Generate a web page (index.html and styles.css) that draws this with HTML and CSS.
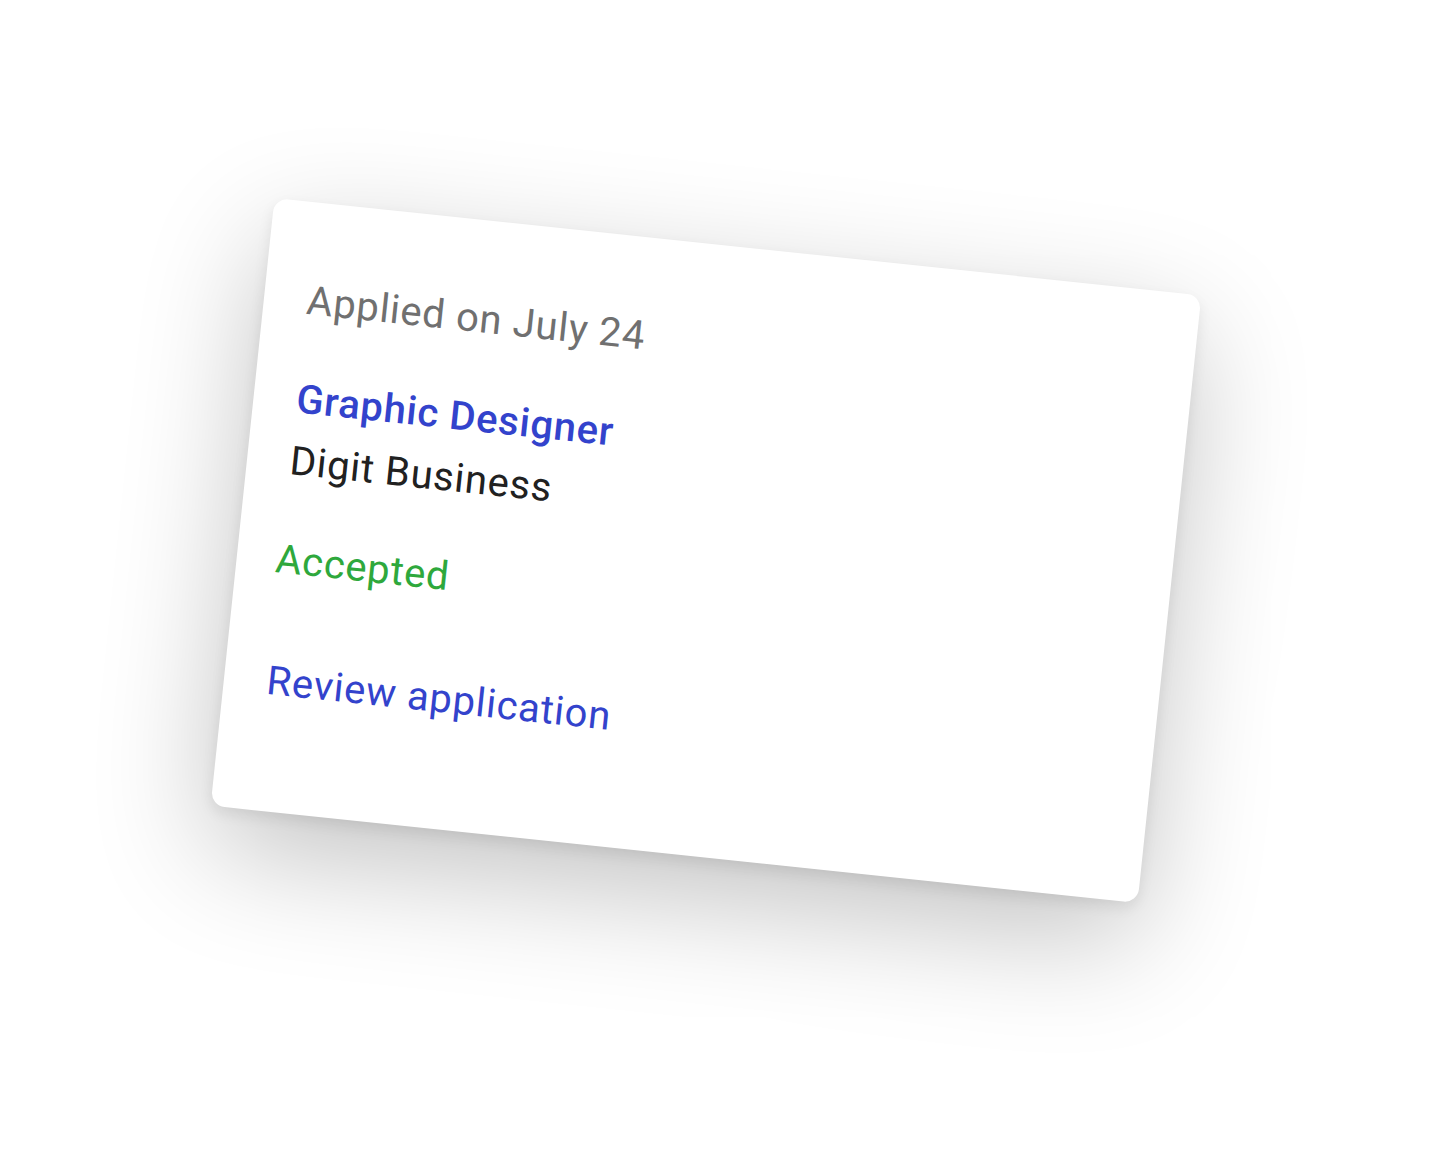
FILE: index.html
```html
<!DOCTYPE html>
<html lang="en">
<head>
<meta charset="utf-8">
<title>Application</title>
<link rel="stylesheet" href="styles.css">
</head>
<body>
<main class="stage">
  <article class="card">
    <p class="date">Applied on July 24</p>
    <h2 class="role">Graphic Designer</h2>
    <p class="company">Digit Business</p>
    <p class="status">Accepted</p>
    <a class="review" href="#">Review application</a>
  </article>
</main>
</body>
</html>
```

FILE: styles.css
```css
html, body {
  margin: 0;
  padding: 0;
  background: #ffffff;
}

body {
  width: 1447px;
  height: 1161px;
  overflow: hidden;
  font-family: Roboto, "Liberation Sans", Arial, sans-serif;
}

.stage {
  padding: 245px 0 0 240px;
}

.card {
  box-sizing: border-box;
  width: 932px;
  height: 611px;
  padding: 69px 43px 0;
  background: #ffffff;
  border-radius: 14px;
  transform: rotate(6deg);
  transform-origin: 50% 50%;
  box-shadow: 0 40px 120px rgba(0, 0, 0, 0.24), 0 6px 14px rgba(0, 0, 0, 0.08);
  display: flex;
  flex-direction: column;
  align-items: flex-start;
  letter-spacing: 0.75px;
}

.card p,
.card h2 {
  margin: 0;
  font-size: 40px;
  line-height: 60px;
}

.date {
  color: #707070;
  font-weight: 400;
}

.card .role {
  margin-top: 39px;
  color: #3343cc;
  font-weight: 500;
}

.card .company {
  margin-top: 2px;
  color: #212121;
}

.card .status {
  margin-top: 39px;
  margin-left: -4px;
  color: #2ea83c;
}

.review {
  margin-top: 62px;
  font-size: 40px;
  line-height: 60px;
  color: #3343cc;
  text-decoration: none;
}
```
